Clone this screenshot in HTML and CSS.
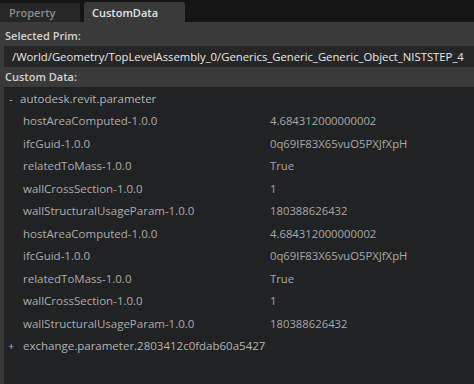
FILE: index.html
```html
<!DOCTYPE html>
<html>
<head>
<meta charset="utf-8">
<link rel="stylesheet" href="styles.css">
</head>
<body>
<div class="tabbar">
  <div class="tab">Property</div>
  <div class="tab active">CustomData</div>
</div>
<div class="panel">
  <div class="label">Selected Prim:</div>
  <div class="field">/World/Geometry/TopLevelAssembly_0/Generics_Generic_Generic_Object_NISTSTEP_4</div>
  <div class="label label2">Custom Data:</div>
  <div class="tree">
    <div class="row group"><span class="tog">-</span><span class="gname">autodesk.revit.parameter</span></div>
    <div class="row"><span class="key">hostAreaComputed-1.0.0</span><span class="val">4.684312000000002</span></div>
    <div class="row"><span class="key">ifcGuid-1.0.0</span><span class="val">0q69IF83X65vuO5PXJfXpH</span></div>
    <div class="row"><span class="key">relatedToMass-1.0.0</span><span class="val">True</span></div>
    <div class="row"><span class="key">wallCrossSection-1.0.0</span><span class="val">1</span></div>
    <div class="row"><span class="key">wallStructuralUsageParam-1.0.0</span><span class="val">180388626432</span></div>
    <div class="row"><span class="key">hostAreaComputed-1.0.0</span><span class="val">4.684312000000002</span></div>
    <div class="row"><span class="key">ifcGuid-1.0.0</span><span class="val">0q69IF83X65vuO5PXJfXpH</span></div>
    <div class="row"><span class="key">relatedToMass-1.0.0</span><span class="val">True</span></div>
    <div class="row"><span class="key">wallCrossSection-1.0.0</span><span class="val">1</span></div>
    <div class="row"><span class="key">wallStructuralUsageParam-1.0.0</span><span class="val">180388626432</span></div>
    <div class="row group"><span class="tog plus">+</span><span class="gname">exchange.parameter.2803412c0fdab60a5427</span></div>
  </div>
</div>
</body>
</html>
```
FILE: styles.css
```css
html, body {
  margin: 0;
  padding: 0;
  height: 100%;
  overflow: hidden;
}
body {
  background: #3a3a3a;
  font-family: "Open Sans", "Noto Sans", sans-serif;
  font-size: 11px;
  display: flex;
  flex-direction: column;
}
.tabbar {
  background: #151515;
  height: 22px;
  display: flex;
  align-items: flex-end;
  gap: 4px;
  flex-shrink: 0;
}
.tab {
  height: 19px;
  width: 80px;
  background: #272727;
  color: #8c8c8c;
  font-size: 11px;
  font-weight: 600;
  display: flex;
  align-items: center;
  padding-left: 9px;
  box-sizing: border-box;
}
.tab.active {
  height: 20px;
  width: 101px;
  background: #3a3a3a;
  color: #e2e2e2;
  padding-left: 8px;
  border-radius: 3px 3px 0 0;
}
.panel {
  flex: 1;
  display: flex;
  flex-direction: column;
  padding-left: 4px;
  min-height: 0;
}
.label {
  color: #d2d2d2;
  font-size: 11px;
  font-weight: 600;
  height: 24px;
  line-height: 28px;
  padding-left: 1px;
}
.label2 {
  height: 20px;
  line-height: 20px;
}
.field {
  height: 21px;
  background: #262626;
  color: #e6e6e6;
  font-size: 11.3px;
  line-height: 21px;
  padding-left: 8px;
  white-space: nowrap;
  overflow: hidden;
}
.tree {
  flex: 1;
  background: #212223;
}
.row {
  height: 22.5px;
  display: flex;
  align-items: center;
  color: #acacac;
  white-space: nowrap;
}
.row.group {
  color: #b4b4b4;
}
.tog {
  width: 16px;
  padding-left: 5px;
  box-sizing: border-box;
}
.tog.plus {
  padding-left: 4px;
  width: 19px;
}
.gname {
  font-size: 11.5px;
}
.key {
  width: 266px;
  padding-left: 19px;
  box-sizing: border-box;
  font-size: 11.5px;
}
.val {
  color: #a8a8a8;
  font-size: 11.3px;
}
```
